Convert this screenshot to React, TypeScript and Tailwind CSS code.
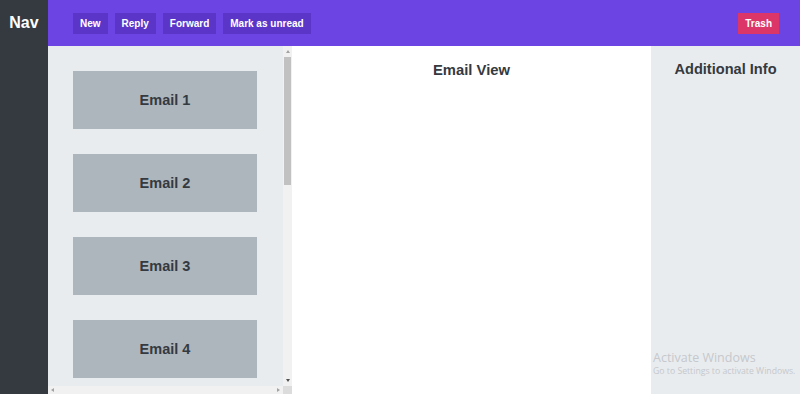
import React from "react";

const emails = Array.from({ length: 10 }, (_, i) => `Email ${i + 1}`);
const actions = ["New", "Reply", "Forward", "Mark as unread"];

export default function App() {
  return (
    <div className="relative flex h-[394px] w-[800px] overflow-hidden font-['Liberation_Sans',Arial,sans-serif] text-[#343a40]">
      {/* Nav */}
      <div className="w-[48px] shrink-0 bg-[#343a40] pt-[11px] text-center text-[16px] font-bold text-white">
        Nav
      </div>

      <div className="flex min-w-0 flex-1 flex-col">
        {/* Toolbar */}
        <div className="flex h-[46px] shrink-0 items-center bg-[#6c44e3] pl-[25px] pr-[21px]">
          <div className="flex gap-[7px]">
            {actions.map(a => (
              <button key={a} className="h-[21px] bg-[#5a35c8] px-[7px] text-[10px] font-bold text-white">
                {a}
              </button>
            ))}
          </div>
          <button className="ml-auto h-[21px] bg-[#dc3568] px-[7px] text-[10px] font-bold text-white">
            Trash
          </button>
        </div>

        <div className="flex min-h-0 flex-1">
          {/* Email list with scrollbars */}
          <div className="flex w-[244px] shrink-0 flex-col bg-[#e9ecef]">
            <div className="flex min-h-0 flex-1">
              <div className="min-w-0 flex-1 overflow-hidden">
                <div className="flex flex-col gap-[25px] px-[25px] py-[25px]">
                  {emails.map(e => (
                    <div key={e} className="flex h-[58px] w-[184px] shrink-0 items-center justify-center bg-[#adb5bd] pt-[2px] text-[14.5px] font-bold">
                      {e}
                    </div>
                  ))}
                </div>
              </div>
              {/* vertical scrollbar */}
              <div className="flex w-[9px] shrink-0 flex-col bg-[#f1f1f1]">
                <div className="flex h-[11px] items-center justify-center">
                  <div className="h-0 w-0 border-x-[2.5px] border-b-[3px] border-x-transparent border-b-[#a3a3a3]" />
                </div>
                <div className="mx-[1px] h-[128px] bg-[#c1c1c1]" />
                <div className="flex-1" />
                <div className="flex h-[11px] items-center justify-center">
                  <div className="h-0 w-0 border-x-[2.5px] border-t-[3px] border-x-transparent border-t-[#505050]" />
                </div>
              </div>
            </div>
            {/* horizontal scrollbar */}
            <div className="flex h-[8px] shrink-0">
              <div className="flex flex-1 items-center justify-between bg-[#f1f1f1] px-[3px]">
                <div className="h-0 w-0 border-y-[2px] border-r-[3px] border-y-transparent border-r-[#a3a3a3]" />
                <div className="h-0 w-0 border-y-[2px] border-l-[3px] border-y-transparent border-l-[#a3a3a3]" />
              </div>
              <div className="w-[9px] bg-[#dcdcdc]" />
            </div>
          </div>

          {/* Email view */}
          <div className="flex-1 bg-white pt-[13px] text-center text-[14.8px] font-bold">
            Email View
          </div>

          {/* Additional info */}
          <div className="w-[149px] shrink-0 bg-[#e9ecef] pt-[13px] text-center text-[14.6px] font-bold">
            Additional Info
          </div>
        </div>
      </div>

      {/* OS watermark */}
      <div className="pointer-events-none absolute left-[653px] top-[350px] whitespace-nowrap font-['Open_Sans',sans-serif] text-[#c5c8cc]">
        <div className="text-[12.5px] leading-[15px]">Activate Windows</div>
        <div className="text-[8.7px] leading-[13px]">Go to Settings to activate Windows.</div>
      </div>
    </div>
  );
}
